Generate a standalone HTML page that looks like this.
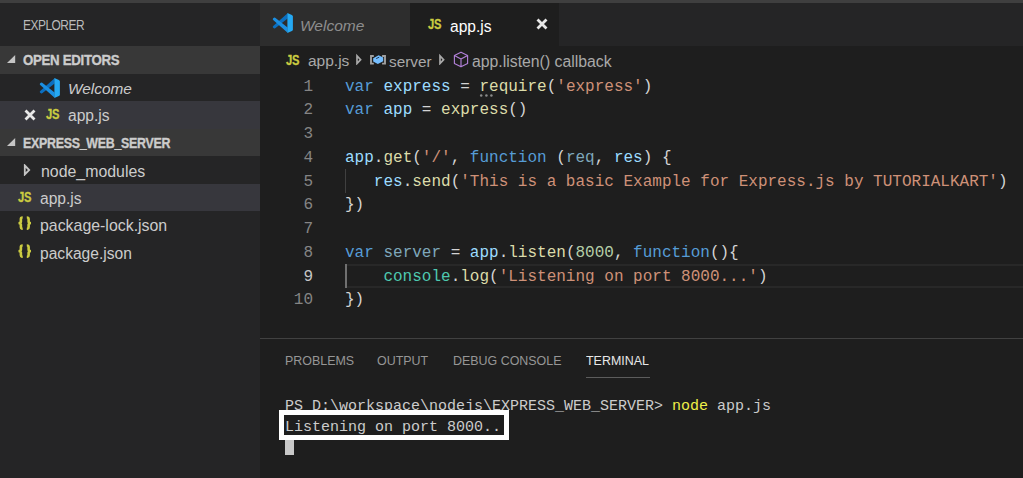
<!DOCTYPE html>
<html><head><meta charset="utf-8">
<style>
*{margin:0;padding:0;box-sizing:border-box}
html,body{width:1023px;height:478px;overflow:hidden;background:#1e1e1e}
body{position:relative;font-family:"Liberation Sans",sans-serif;color:#ccc}
.a{position:absolute;white-space:pre}
.mono{font-family:"Liberation Mono",monospace}
#top{left:0;top:0;width:1023px;height:3px;background:#3f3f3f}
#side{left:0;top:3px;width:260px;height:475px;background:#252526}
.hdr{position:absolute;left:0;width:260px;height:27.5px;background:#383838}
.sel{position:absolute;left:0;width:260px;height:27.5px;background:#37373d}
.t{position:absolute;white-space:pre;line-height:1}
.js{position:absolute;font-weight:bold;color:#cbcb41;-webkit-text-stroke:0.3px #cbcb41;line-height:1;font-size:14px;letter-spacing:-0.3px;transform:scaleX(0.8);transform-origin:0 0}
#tabs{left:260px;top:3px;width:763px;height:43px;background:#252526}
#code .l{position:absolute;margin-top:2px;left:345px;height:23.75px;line-height:23.75px;font-size:16px;color:#d4d4d4}
#code .n{position:absolute;margin-top:2px;width:60px;left:253px;text-align:right;height:23.75px;line-height:23.75px;font-size:16px;color:#858585}
.kw{color:#569cd6}.vr{color:#9cdcfe}.fn{color:#dcdcaa}.st{color:#ce9178}.nu{color:#b5cea8}.ty{color:#4ec9b0}.dim{color:#7fa8bb}
.ptab{position:absolute;top:354px;font-size:13.6px;line-height:1;color:#969696;transform:scaleX(0.915);transform-origin:0 0}
.term{position:absolute;left:285px;font-size:15px;line-height:20px;color:#cccccc}
</style></head><body>
<div class="a" id="top"></div>
<div class="a" id="side">
  <div class="t" style="left:23px;top:15px;font-size:14.4px;color:#bbbbbb;letter-spacing:-0.6px;transform:scaleX(0.83);transform-origin:0 0">EXPLORER</div>
  <div class="hdr" style="top:43px"></div>
  <svg class="a" style="left:6px;top:51px" width="10" height="10" viewBox="0 0 10 10"><path d="M9.2 1 L9.2 9 L1 9 Z" fill="#c5c5c5"/></svg>
  <div class="t" style="left:23px;top:49.5px;font-size:14px;font-weight:bold;color:#cccccc;letter-spacing:-0.3px;-webkit-text-stroke:0.35px #cccccc;transform:scaleX(0.945);transform-origin:0 0">OPEN EDITORS</div>
  <!-- Welcome row -->
  <svg class="a" style="left:37px;top:72px" width="26" height="26" viewBox="0 0 26 26"><path d="M17.6 3.2L17.6 8.6L5.2 18.2Q4.3 18.8 3.5 18L3 17.4Q2.4 16.6 3.2 15.9Z" fill="#0b6fc0"/><path d="M3.2 10.1Q2.4 9.4 3 8.6L3.5 8Q4.3 7.2 5.2 7.8L17.6 17.4L17.6 22.8Z" fill="#1b8fe2"/><path d="M17.4 3L21.9 5Q22.9 5.5 22.9 6.6V19.4Q22.9 20.5 21.9 21L17.4 23Z" fill="#25a9f3"/></svg>
  <div class="t" style="left:68px;top:78px;font-size:15.4px;font-style:italic;color:#cccccc">Welcome</div>
  <div class="sel" style="top:98px"></div>
  <svg class="a" style="left:24px;top:106px" width="12" height="12" viewBox="0 0 12 12"><path d="M1.5 1.5L10.5 10.5M10.5 1.5L1.5 10.5" stroke="#e8e8e8" stroke-width="2.8"/></svg>
  <div class="js" style="left:45.5px;top:103.5px">JS</div>
  <div class="t" style="left:68px;top:105px;font-size:15.6px;color:#cccccc">app.js</div>
  <div class="hdr" style="top:125.5px"></div>
  <svg class="a" style="left:6px;top:134px" width="10" height="10" viewBox="0 0 10 10"><path d="M9.2 1 L9.2 9 L1 9 Z" fill="#c5c5c5"/></svg>
  <div class="t" style="left:23px;top:133px;font-size:14px;font-weight:bold;color:#cccccc;letter-spacing:-0.3px;-webkit-text-stroke:0.35px #cccccc;transform:scaleX(0.885);transform-origin:0 0">EXPRESS_WEB_SERVER</div>
  <svg class="a" style="left:23px;top:161px" width="8" height="12" viewBox="0 0 8 12"><path d="M1.8 1.5 L6.2 6 L1.8 10.5 Z" fill="none" stroke="#c5c5c5" stroke-width="1.8"/></svg>
  <div class="t" style="left:41px;top:161px;font-size:15.9px;color:#cccccc">node_modules</div>
  <div class="sel" style="top:180.5px"></div>
  <div class="js" style="left:18px;top:187px">JS</div>
  <div class="t" style="left:40px;top:188px;font-size:15.6px;color:#cccccc">app.js</div>
  <svg class="a" style="left:17px;top:213.3px" width="15.5" height="14.2" viewBox="0 0 16 16" preserveAspectRatio="none"><path d="M5.9 1.5C4.3 1.5 4 2.3 4 3.6V6.2C4 7.3 3.4 7.9 1.6 8C3.4 8.1 4 8.7 4 9.8V12.4C4 13.7 4.3 14.5 5.9 14.5M10.1 1.5C11.7 1.5 12 2.3 12 3.6V6.2C12 7.3 12.6 7.9 14.4 8C12.6 8.1 12 8.7 12 9.8V12.4C12 13.7 11.7 14.5 10.1 14.5" fill="none" stroke="#cbcb41" stroke-width="2.7" stroke-linejoin="miter"/></svg>
  <div class="t" style="left:40px;top:215.3px;font-size:15.9px;color:#cccccc">package-lock.json</div>
  <svg class="a" style="left:17px;top:241px" width="15.5" height="14.2" viewBox="0 0 16 16" preserveAspectRatio="none"><path d="M5.9 1.5C4.3 1.5 4 2.3 4 3.6V6.2C4 7.3 3.4 7.9 1.6 8C3.4 8.1 4 8.7 4 9.8V12.4C4 13.7 4.3 14.5 5.9 14.5M10.1 1.5C11.7 1.5 12 2.3 12 3.6V6.2C12 7.3 12.6 7.9 14.4 8C12.6 8.1 12 8.7 12 9.8V12.4C12 13.7 11.7 14.5 10.1 14.5" fill="none" stroke="#cbcb41" stroke-width="2.7" stroke-linejoin="miter"/></svg>
  <div class="t" style="left:40px;top:243px;font-size:15.6px;color:#cccccc">package.json</div>
</div>

<div class="a" id="tabs"></div>
<div class="a" style="left:260px;top:3px;width:150px;height:43px;background:#2d2d2d"></div>
<svg class="a" style="left:270px;top:10px" width="26" height="26" viewBox="0 0 26 26"><path d="M17.6 3.2L17.6 8.6L5.2 18.2Q4.3 18.8 3.5 18L3 17.4Q2.4 16.6 3.2 15.9Z" fill="#0b6fc0"/><path d="M3.2 10.1Q2.4 9.4 3 8.6L3.5 8Q4.3 7.2 5.2 7.8L17.6 17.4L17.6 22.8Z" fill="#1b8fe2"/><path d="M17.4 3L21.9 5Q22.9 5.5 22.9 6.6V19.4Q22.9 20.5 21.9 21L17.4 23Z" fill="#25a9f3"/></svg>
<div class="t" style="left:300px;top:17.7px;font-size:15.5px;font-style:italic;color:#8d8d8d">Welcome</div>
<div class="a" style="left:410px;top:3px;width:149px;height:43px;background:#1e1e1e"></div>
<div class="js" style="left:428px;top:17px">JS</div>
<div class="t" style="left:450px;top:18.5px;font-size:15.6px;color:#ffffff">app.js</div>
<svg class="a" style="left:536px;top:18px" width="12" height="12" viewBox="0 0 12 12"><path d="M1.5 1.5L10.5 10.5M10.5 1.5L1.5 10.5" stroke="#e8e8e8" stroke-width="2.8"/></svg>

<!-- breadcrumbs -->
<div class="js" style="left:285.5px;top:52.5px">JS</div>
<div class="t" style="left:308px;top:53px;font-size:15.5px;color:#a9a9a9">app.js</div>
<svg class="a" style="left:355px;top:53px" width="8" height="12" viewBox="0 0 8 12"><path d="M2 2.9 L5.6 6.7 L2 10.5 Z" fill="none" stroke="#a9a9a9" stroke-width="1.7" stroke-linejoin="miter"/></svg>
<svg class="a" style="left:368px;top:53px" width="20" height="14" viewBox="0 0 20 14"><path d="M5.8 3H3V10.6H5.8M14.1 3H17V10.6H14.1" fill="none" stroke="#a0a0a0" stroke-width="1.9"/><path d="M5.2 5.2L10.6 2.2L15.2 4.4V8.2L9.8 10.9L5.2 8.6Z" fill="#75beff"/><path d="M8.2 5.6L11.2 4.2" stroke="#1e3a55" stroke-width="1"/></svg>
<div class="t" style="left:389px;top:53.5px;font-size:15.3px;color:#a9a9a9">server</div>
<svg class="a" style="left:438px;top:53px" width="8" height="12" viewBox="0 0 8 12"><path d="M2 2.9 L5.6 6.7 L2 10.5 Z" fill="none" stroke="#a9a9a9" stroke-width="1.7" stroke-linejoin="miter"/></svg>
<svg class="a" style="left:453px;top:51px" width="16" height="17" viewBox="0 0 16 17"><path d="M8 1.2L14.6 4.6V12.4L8 15.8L1.4 12.4V4.6Z M1.4 4.6L8 8L14.6 4.6 M8 8V15.8" fill="none" stroke="#b180d7" stroke-width="1.15" stroke-linejoin="round"/></svg>
<div class="t" style="left:472px;top:53.5px;font-size:15.8px;color:#a9a9a9">app.listen() callback</div>

<!-- code -->
<div id="code" class="mono">
<div class="a" style="left:345px;top:264px;width:690px;height:24px;border:2px solid #282828"></div>
<div class="a" style="left:345px;top:169px;width:1px;height:24px;background:#404040"></div>
<div class="a" style="left:345px;top:264px;width:2px;height:24px;background:#707070"></div>
<div class="n" style="top:73.5px">1</div>
<div class="n" style="top:97.25px">2</div>
<div class="n" style="top:121px">3</div>
<div class="n" style="top:144.75px">4</div>
<div class="n" style="top:168.5px">5</div>
<div class="n" style="top:192.25px">6</div>
<div class="n" style="top:216px">7</div>
<div class="n" style="top:239.75px">8</div>
<div class="n" style="top:263.5px;color:#c6c6c6">9</div>
<div class="n" style="top:287.25px">10</div>
<div class="l a" style="top:73.5px"><span class="kw">var</span> <span class="vr">express</span> = <span class="fn">require</span>(<span class="st">'express'</span>)</div>
<div class="l a" style="top:97.25px"><span class="kw">var</span> <span class="vr">app</span> = <span class="fn">express</span>()</div>
<div class="l a" style="top:144.75px"><span class="vr">app</span>.<span class="fn">get</span>(<span class="st">'/'</span>, <span class="kw">function</span> (<span class="dim">req</span>, <span class="vr">res</span>) {</div>
<div class="l a" style="top:168.5px">   <span class="vr">res</span>.<span class="fn">send</span>(<span class="st">'This is a basic Example for Express.js by TUTORIALKART'</span>)</div>
<div class="l a" style="top:192.25px">})</div>
<div class="l a" style="top:239.75px"><span class="kw">var</span> <span class="dim">server</span> = <span class="vr">app</span>.<span class="fn">listen</span>(<span class="nu">8000</span>, <span class="kw">function</span>(){</div>
<div class="l a" style="top:263.5px">    <span class="ty">console</span>.<span class="fn">log</span>(<span class="st">'Listening on port 8000...'</span>)</div>
<div class="l a" style="top:287.25px">})</div>
</div>

<svg class="a" style="left:478px;top:93px" width="18" height="6" viewBox="0 0 18 6"><circle cx="3.2" cy="2.6" r="1.25" fill="#8a8a8a"/><circle cx="8.4" cy="2.6" r="1.25" fill="#8a8a8a"/><circle cx="13.4" cy="2.6" r="1.25" fill="#8a8a8a"/></svg>
<!-- panel -->
<div class="a" style="left:260px;top:338px;width:763px;height:1px;background:#414141"></div>
<div class="ptab" style="left:285px">PROBLEMS</div>
<div class="ptab" style="left:377px">OUTPUT</div>
<div class="ptab" style="left:453px">DEBUG CONSOLE</div>
<div class="ptab" style="left:586px;color:#e7e7e7">TERMINAL</div>
<div class="a" style="left:586px;top:377px;width:64px;height:1px;background:#5c5c5c"></div>

<div class="term mono" style="top:396.5px">PS D:\workspace\nodejs\EXPRESS_WEB_SERVER&gt; <span style="color:#f0f048">node</span> app.js</div>
<div class="a" style="left:279px;top:410px;width:230px;height:30px;border:5px solid #ffffff;background:#1e1e1e"></div>
<div class="term mono" style="top:417.5px">Listening on port 8000..</div>
<div class="a" style="left:285px;top:440px;width:9px;height:15px;background:#c8c8c8"></div>
</body></html>
